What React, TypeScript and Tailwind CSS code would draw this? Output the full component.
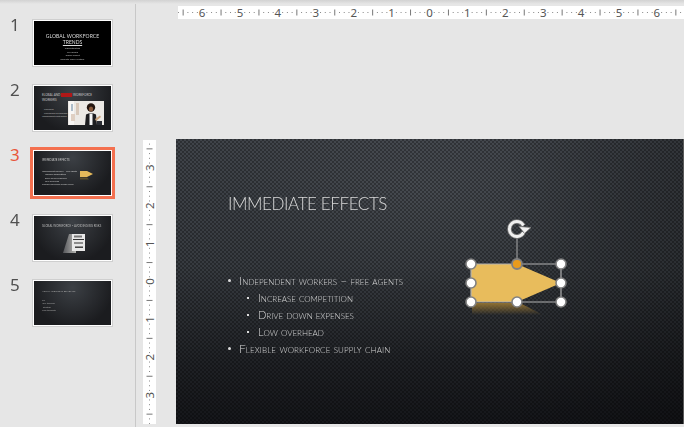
import React from "react";

function HRuler() {
  const u = 37.9;
  const cx = 251.5;
  const ticks: React.ReactNode[] = [];
  for (let i = -54; i <= 54; i++) {
    const x = cx + (i * u) / 8;
    if (x < 0 || x > 506) continue;
    if (i % 8 === 0) continue;
    if (i % 4 === 0) ticks.push(<line key={i} x1={x} x2={x} y1={3.5} y2={9.5} stroke="#777" strokeWidth={1} />);
    else ticks.push(<line key={i} x1={x} x2={x} y1={6} y2={7} stroke="#888" strokeWidth={1} />);
  }
  const nums = [6, 5, 4, 3, 2, 1, 0, 1, 2, 3, 4, 5, 6];
  return (
    <svg width="506" height="13" className="block bg-white">
      {ticks}
      {nums.map((n, i) => (
        <text key={i} x={cx + (i - 6) * u} y={11} textAnchor="middle" fontSize="11.5" fill="#555" fontFamily="Noto Sans, sans-serif">{n}</text>
      ))}
    </svg>
  );
}

function VRuler() {
  const u = 37.9;
  const cy = 141.5;
  const ticks: React.ReactNode[] = [];
  for (let i = -30; i <= 30; i++) {
    const y = cy + (i * u) / 8;
    if (y < 0 || y > 284) continue;
    if (i % 8 === 0) continue;
    if (i % 4 === 0) ticks.push(<line key={i} y1={y} y2={y} x1={3.5} x2={9.5} stroke="#777" strokeWidth={1} />);
    else ticks.push(<line key={i} y1={y} y2={y} x1={6} x2={7} stroke="#888" strokeWidth={1} />);
  }
  const nums = [3, 2, 1, 0, 1, 2, 3];
  return (
    <svg width="13" height="284" className="block bg-white">
      {ticks}
      {nums.map((n, i) => {
        const y = cy + (i - 3) * u;
        return (
          <text key={i} x={11} y={y} transform={`rotate(-90 11 ${y})`} textAnchor="middle" fontSize="11.5" fill="#555" fontFamily="Noto Sans, sans-serif">{n}</text>
        );
      })}
    </svg>
  );
}

function Thumb({ n, active, children }: { n: number; active?: boolean; children: React.ReactNode }) {
  return (
    <div className="flex h-[65px] items-start">
      <div className={`-mt-[5px] w-[33px] pl-[10px] text-[17px] leading-[20px] ${active ? "text-[#e8573a]" : "text-[#505050] grayscale"}`}>{n}</div>
      <div className={active ? "-mt-[3px] -ml-[3px] border-[3px] border-[#f4704f]" : "shadow-[0_0_0_1px_#cfcfcf]"}>
        <div className="relative h-[46px] w-[79px] overflow-hidden border border-white bg-[radial-gradient(ellipse_at_50%_15%,#3c4045_0%,#1b1c1f_75%)] text-[#cfcfcf]">
          {children}
        </div>
      </div>
    </div>
  );
}

export default function App() {
  return (
    <div className="relative flex h-[427px] w-[684px] overflow-hidden bg-[#e6e6e6] font-['Noto_Sans',sans-serif]">
      <div className="pointer-events-none absolute inset-x-0 top-0 h-[4px] bg-gradient-to-b from-[#d2d2d2] to-[#e6e6e6]" />
      {/* thumbnails */}
      <aside className="flex h-full w-[136px] shrink-0 flex-col border-r border-[#c8c8c8] pt-[20px] pr-[5px]">
        <Thumb n={1}>
          <div className="flex h-full flex-col items-center bg-black pt-[12px] font-['Lato',sans-serif] text-[#dddddd] grayscale">
            <div className="text-[5px] leading-[6px] tracking-[0.1px]">GLOBAL WORKFORCE</div>
            <div className="text-[5px] leading-[7px] underline">TRENDS</div>
            <div className="mt-[1px] flex flex-col items-center text-[2.5px] leading-[3.5px] text-[#bbbbbb]">
              <span>Opportunities</span>
              <span>For Teams</span>
              <span>Global Talent</span>
              <span>Remote Work Culture</span>
            </div>
          </div>
        </Thumb>
        <Thumb n={2}>
          <div className="px-[8px] pt-[7px] font-['Lato',sans-serif] text-[3px] leading-[4.5px] text-[#c8c8c8]">
            <div>
              ELOBAL AND <span className="bg-[#b01818] text-[#b01818]">MOBILE</span> WORKFORCE
              <br />
              WORKERS
            </div>
            <div className="mt-[6px] flex flex-col text-[2.3px] leading-[3.6px] text-[#b8b8b8]">
              <span className="pl-[2px]">Freelance</span>
              <span className="pl-[2px]">Freelancers on demand</span>
              <span>Independent contractors</span>
            </div>
          </div>
          <svg viewBox="0 0 36 24" className="absolute left-[34px] top-[15px] h-[24px] w-[36px]">
            <rect width="36" height="24" fill="#ece9e5" />
            <rect x="1" y="0" width="5" height="24" fill="#f8f6f4" />
            <rect x="3" y="3" width="2" height="7" fill="#aebdca" />
            <rect x="8" y="2" width="3" height="12" fill="#d8c8ba" />
            <rect x="3" y="13" width="4" height="7" fill="#dfcfc2" />
            <circle cx="23" cy="6.5" r="4.2" fill="#241610" />
            <ellipse cx="23" cy="8" rx="2.2" ry="2.6" fill="#8a5a3c" />
            <path d="M17 24 L18 13.5 Q23 10.5 28 13.5 L29 24 Z" fill="#1d1d20" />
            <path d="M21.5 12.5 L24.5 12.5 L24.5 24 L21.5 24 Z" fill="#f4f4f4" />
            <path d="M27 18 L32 14.5 L33 16 L28 20 Z" fill="#c9a27c" />
            <rect x="29" y="20" width="5" height="4" fill="#2a2c33" />
          </svg>
        </Thumb>
        <Thumb n={3} active>
          <div className="px-[8px] pt-[7px] font-['Lato',sans-serif] text-[2.8px] leading-[4px] text-[#c8c8c8] grayscale">
            <div>IMMEDIATE EFFECTS</div>
            <div className="mt-[8px] flex flex-col text-[2.3px] leading-[3.3px] text-[#c0c0c0]">
              <span>Independent workers – free agents</span>
              <span className="pl-[3px]">Increase competition</span>
              <span className="pl-[3px]">Drive down expenses</span>
              <span className="pl-[3px]">Low overhead</span>
              <span>Flexible workforce supply chain</span>
            </div>
          </div>
          <svg viewBox="0 0 16 12" className="absolute left-[45px] top-[19px] h-[12px] w-[16px]">
            <path d="M1 1 H8 L14 4 L8 7 H1 Z" fill="#e6ba5b" />
            <path d="M1 7.5 H8 L10 9.5 H1 Z" fill="#5e4f2a" />
          </svg>
        </Thumb>
        <Thumb n={4}>
          <div className="px-[8px] pt-[8px] font-['Lato',sans-serif] text-[2.8px] leading-[4px] text-[#b4b4b4] grayscale">GLOBAL WORKFORCE – AVOIDING BIG RISKS</div>
          <svg viewBox="0 0 30 24" className="absolute left-[28px] top-[16px] h-[24px] w-[30px]">
            <defs>
              <linearGradient id="trap" x1="0" x2="1" y1="0" y2="0">
                <stop offset="0" stopColor="#55565a" />
                <stop offset="1" stopColor="#b5b5b2" />
              </linearGradient>
            </defs>
            <path d="M7 2 H14 V21 H1 Z" fill="url(#trap)" />
            <rect x="10" y="2" width="13" height="17" fill="#e9e9e9" />
            <rect x="12" y="3.5" width="8" height="2" fill="#777" />
            <rect x="11" y="7" width="11" height="1" fill="#333" />
            <rect x="12" y="10.5" width="9" height="1" fill="#333" />
            <rect x="13" y="14.5" width="8" height="1.4" fill="#333" />
          </svg>
        </Thumb>
        <Thumb n={5}>
          <div className="px-[8px] pt-[8px] font-['Lato',sans-serif] text-[2.6px] leading-[4px] text-[#a8a8a8] grayscale">
            <div>NEXT MODULE & BENEFITS</div>
            <div className="mt-[6px] flex flex-col text-[2.2px] leading-[3.4px] text-[#a0a0a0]">
              <span>TO</span>
              <span>Your thinking</span>
              <span className="pl-[1px]">Strategy</span>
              <span>Final thoughts</span>
            </div>
          </div>
        </Thumb>
      </aside>

      {/* editor */}
      <main className="flex min-w-0 flex-1 flex-col">
        <div className="ml-[42px] mt-[6px] h-[13px] shrink-0">
          <HRuler />
        </div>
        <div className="mt-[120px] flex flex-1 items-start">
          <div className="ml-[7px] mt-[1px] w-[13px] shrink-0">
            <VRuler />
          </div>
          <div className="relative ml-[20px] h-[285px] w-[508px] shrink-0 overflow-hidden border-r border-[#5a5a5a] bg-[linear-gradient(180deg,#3f4349_0%,#363a3f_45%,#202226_78%,#15161a_100%)]">
            <div className="absolute inset-0 bg-[radial-gradient(ellipse_320px_170px_at_50%_18%,rgba(130,135,140,0.14)_0%,rgba(80,82,86,0.05)_60%,rgba(0,0,0,0)_100%)]" />
            <div className="absolute inset-0 bg-[linear-gradient(90deg,rgba(0,0,0,0)_65%,rgba(0,0,0,0.22)_100%)]" />
            <div className="absolute inset-0 bg-[repeating-conic-gradient(#000_0_25%,rgba(0,0,0,0)_0_50%)] bg-[length:4px_4px] opacity-[0.3]" />

            <div className="relative pl-[52px] pt-[53px] font-['Lato',sans-serif] text-[#d8d8d8] grayscale">
              <h1 className="text-[17px] font-light leading-[24px] tracking-[-0.4px]">IMMEDIATE EFFECTS</h1>
              <ul className="mt-[56px] flex flex-col text-[11px] font-light leading-[17px] [font-variant:small-caps]">
                <li className="flex items-center text-[12px]"><span className="mr-[8px] h-[3px] w-[3px] rounded-full bg-[#dcdcdc]" />Independent workers – free agents</li>
                <li className="ml-[19px] flex items-center"><span className="mr-[9px] h-[2px] w-[2px] bg-[#dcdcdc]" />Increase competition</li>
                <li className="ml-[19px] flex items-center"><span className="mr-[9px] h-[2px] w-[2px] bg-[#dcdcdc]" />Drive down expenses</li>
                <li className="ml-[19px] flex items-center"><span className="mr-[9px] h-[2px] w-[2px] bg-[#dcdcdc]" />Low overhead</li>
                <li className="flex items-center text-[12px] tracking-[0.1px]"><span className="mr-[8px] h-[3px] w-[3px] rounded-full bg-[#dcdcdc]" />Flexible workforce supply chain</li>
              </ul>
            </div>

            {/* selected shape */}
            <svg viewBox="0 0 120 110" className="absolute left-[284px] top-[79px] h-[110px] w-[120px]">
              <defs>
                <linearGradient id="refl" x1="0" y1="0" x2="0" y2="1">
                  <stop offset="0" stopColor="#8f7032" />
                  <stop offset="1" stopColor="#8f7032" stopOpacity="0" />
                </linearGradient>
              </defs>
              <path d="M12 85 H60 L83 97 H12 Z" fill="url(#refl)" />
              <path d="M11 46 H57 L101 65 L57 84 H11 Z" fill="#e8bc5c" />
              <path d="M11 46 H101 V84 H11 Z" fill="none" stroke="#b0b0b0" strokeWidth="1.2" />
              <line x1="57" y1="20" x2="57" y2="46" stroke="#a8a8a8" strokeWidth="1" />
              <g fill="none" strokeLinecap="butt">
                <path d="M63.5 7.5 A7.5 7.5 0 1 0 63.5 14.5" stroke="#7a7a7a" strokeWidth="4.6" />
                <path d="M63.5 7.5 A7.5 7.5 0 1 0 63.5 14.5" stroke="#f0f0f0" strokeWidth="2.8" />
              </g>
              <path d="M59 8.5 L71 9.5 L64.5 15.5 Z" fill="#f0f0f0" stroke="#7a7a7a" strokeWidth="0.8" />
              {[[11, 46], [101, 46], [11, 65], [101, 65], [11, 84], [57, 84], [101, 84]].map(([x, y]) => (
                <circle key={`${x}-${y}`} cx={x} cy={y} r="5" fill="#ffffff" stroke="#808080" strokeWidth="1.6" />
              ))}
              <circle cx="57" cy="46" r="5" fill="#e89b1c" stroke="#808080" strokeWidth="1.8" />
            </svg>
          </div>
        </div>
      </main>
    </div>
  );
}
